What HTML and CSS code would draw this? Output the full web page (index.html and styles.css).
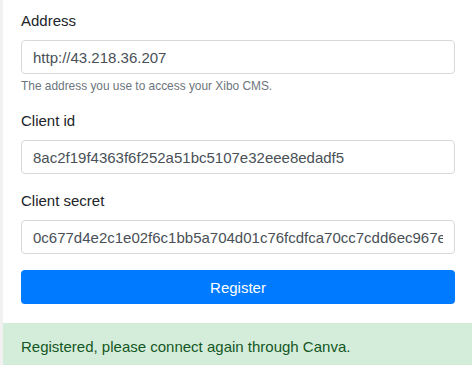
FILE: index.html
```html
<!DOCTYPE html>
<html lang="en">
<head>
<meta charset="utf-8">
<title>Register</title>
<link rel="stylesheet" href="styles.css">
</head>
<body>
<div class="panel">
  <form class="form">
    <div class="group">
      <label class="label">Address</label>
      <input class="control" type="text" value="http://43.218.36.207">
      <small class="help">The address you use to access your Xibo CMS.</small>
    </div>
    <div class="group">
      <label class="label">Client id</label>
      <input class="control" type="text" value="8ac2f19f4363f6f252a51bc5107e32eee8edadf5">
    </div>
    <div class="group">
      <label class="label">Client secret</label>
      <input class="control" type="text" value="0c677d4e2c1e02f6c1bb5a704d01c76fcdfca70cc7cdd6ec967e5f">
    </div>
    <button class="btn" type="button">Register</button>
  </form>
  <div class="alert">Registered, please connect again through Canva.</div>
</div>
</body>
</html>
```

FILE: styles.css
```css
html, body {
  margin: 0;
  padding: 0;
  height: 100%;
  background: #f1f1f1;
  font-family: "Liberation Sans", Arial, sans-serif;
  color: #212529;
}
.panel {
  margin-left: 3px;
  background: #fff;
  min-height: 100%;
  overflow: hidden;
}
.form {
  display: flex;
  flex-direction: column;
  padding: 8px 19px 0 18px;
}
.group {
  display: flex;
  flex-direction: column;
  margin-bottom: 14px;
}
.label {
  font-size: 15px;
  line-height: 22px;
  padding-top: 2px;
  margin-bottom: 8px;
}
.control {
  box-sizing: border-box;
  height: 34px;
  padding: 0 11px;
  border: 1px solid #d6d9dc;
  border-radius: 4px;
  font-family: inherit;
  font-size: 15px;
  color: #495057;
  background: #fff;
  outline: none;
  width: 100%;
}
.help {
  margin-top: 4px;
  font-size: 11.9px;
  line-height: 16px;
  color: #6c757d;
}
.btn {
  margin-top: 2px;
  height: 34px;
  border: none;
  border-radius: 4px;
  background: #007bff;
  color: #fff;
  font-family: inherit;
  font-size: 15px;
  width: 100%;
}
.alert {
  margin-top: 19px;
  margin-right: 2px;
  background: #d4edda;
  color: #155724;
  font-size: 15px;
  line-height: 24px;
  padding: 12px 18px;
}
```
